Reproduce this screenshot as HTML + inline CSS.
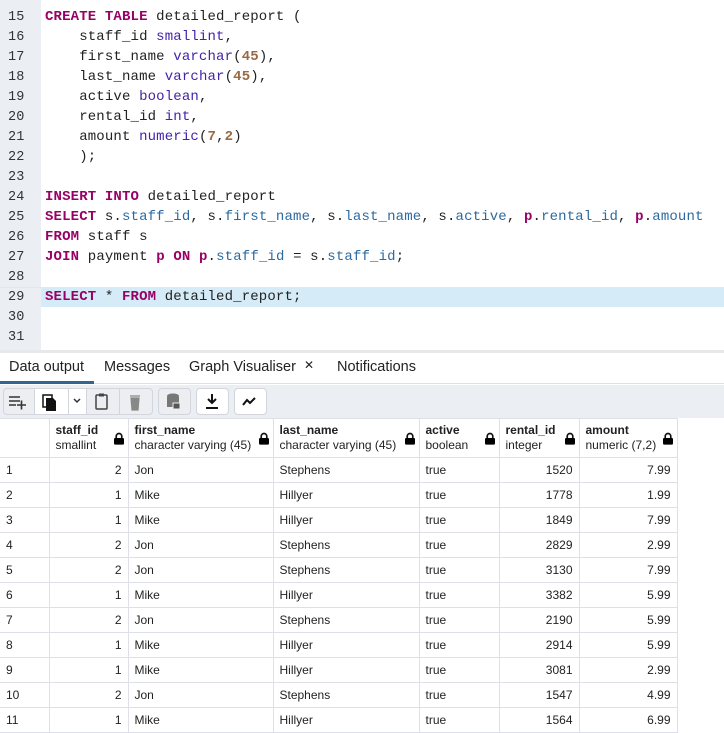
<!DOCTYPE html>
<html><head><style>
*{margin:0;padding:0;box-sizing:border-box}
body{width:724px;height:730px;overflow:hidden;background:#fff;position:relative;font-family:"Liberation Sans",sans-serif}
.gut{position:absolute;left:0;top:0;width:41px;height:350px;background:#ebeef3}
.code{position:absolute;left:0;top:-13px;width:724px}
.ln{height:20px;line-height:20px;font-family:"Liberation Mono",monospace;font-size:14px;letter-spacing:0.15px;white-space:pre;position:relative;color:#222}
.ln .n{display:inline-block;width:41px;padding-left:8px;color:#333;font-size:13.5px}
.ln .t{position:absolute;left:45px;top:0}
.hl{background:#d6ebf8}
.hl .n{background:#ebeef3}
.k{color:#990066;font-weight:bold}
.b{color:#4422aa}
.num{color:#9a6a42;font-weight:bold}
.p{color:#2b6aa0}
.sep{position:absolute;left:0;top:350px;width:724px;height:3px;background:#e6e8ec}
.tabs{position:absolute;left:0;top:353px;width:724px;height:31px;border-bottom:1px solid #dde0e6;font-size:14.5px;color:#222}
.tabs span{position:absolute;top:6px}
.ul{position:absolute;left:0;top:28px;width:94px;height:3px;background:#326690}
.tb{position:absolute;left:0;top:385px;width:724px;height:33px;background:#ebeef3}
.btn{position:absolute;top:3px;height:27px;border:1px solid #d2d6dc;border-radius:4px;background:#eceef1}
.w{background:#fff}
table{position:absolute;left:0;top:418px;border-collapse:collapse;font-size:12px;color:#222}
td{border:1px solid #dde0e6;height:25px;padding:0 6px;white-space:nowrap}
th{border:1px solid #dde0e6;height:39px;padding:0 6px;text-align:left;font-weight:normal;position:relative;vertical-align:middle;line-height:15px}
th b{display:block;font-weight:bold}
.r{text-align:right}
.lock{position:absolute;right:4px;top:13px;width:10px;height:13px}
td:first-child,th:first-child{border-left:none}
</style></head><body>
<div class="gut"></div>
<div class="code">
<div class="ln"><span class="n">14</span></div>
<div class="ln"><span class="n">15</span><span class="t"><span class="k">CREATE TABLE</span> detailed_report (</span></div>
<div class="ln"><span class="n">16</span><span class="t">    staff_id <span class="b">smallint</span>,</span></div>
<div class="ln"><span class="n">17</span><span class="t">    first_name <span class="b">varchar</span>(<span class="num">45</span>),</span></div>
<div class="ln"><span class="n">18</span><span class="t">    last_name <span class="b">varchar</span>(<span class="num">45</span>),</span></div>
<div class="ln"><span class="n">19</span><span class="t">    active <span class="b">boolean</span>,</span></div>
<div class="ln"><span class="n">20</span><span class="t">    rental_id <span class="b">int</span>,</span></div>
<div class="ln"><span class="n">21</span><span class="t">    amount <span class="b">numeric</span>(<span class="num">7</span>,<span class="num">2</span>)</span></div>
<div class="ln"><span class="n">22</span><span class="t">    );</span></div>
<div class="ln"><span class="n">23</span></div>
<div class="ln"><span class="n">24</span><span class="t"><span class="k">INSERT INTO</span> detailed_report</span></div>
<div class="ln"><span class="n">25</span><span class="t"><span class="k">SELECT</span> s.<span class="p">staff_id</span>, s.<span class="p">first_name</span>, s.<span class="p">last_name</span>, s.<span class="p">active</span>, <span class="k">p</span>.<span class="p">rental_id</span>, <span class="k">p</span>.<span class="p">amount</span></span></div>
<div class="ln"><span class="n">26</span><span class="t"><span class="k">FROM</span> staff s</span></div>
<div class="ln"><span class="n">27</span><span class="t"><span class="k">JOIN</span> payment <span class="k">p</span> <span class="k">ON</span> <span class="k">p</span>.<span class="p">staff_id</span> = s.<span class="p">staff_id</span>;</span></div>
<div class="ln"><span class="n">28</span></div>
<div class="ln hl"><span class="n">29</span><span class="t"><span class="k">SELECT</span> * <span class="k">FROM</span> detailed_report;</span></div>
<div class="ln"><span class="n">30</span></div>
<div class="ln"><span class="n">31</span></div>
</div>
<div class="sep"></div>
<div class="tabs">
<span style="left:9px">Data output</span><span style="left:104px">Messages</span><span style="left:189px">Graph Visualiser</span><span style="left:304px;font-size:12px;top:5px">✕</span><span style="left:337px">Notifications</span>
<div class="ul"></div>
</div>
<div class="tb">
<div class="btn" style="left:3px;width:150px"></div>
<div class="btn w" style="left:34px;width:35px;border-radius:0"></div>
<div class="btn w" style="left:68px;width:19px;border-radius:0"></div>
<div style="position:absolute;left:119px;top:3px;width:1px;height:27px;background:#d2d6dc"></div>
<div class="btn" style="left:158px;width:33px"></div>
<div class="btn w" style="left:196px;width:33px"></div>
<div class="btn w" style="left:234px;width:33px"></div>
<svg width="300" height="33" style="position:absolute;left:0;top:0">
<g stroke="#333" stroke-width="1.6" fill="none"><path d="M9 12h11M9 16h11M9 20h7M17 20h9M21.5 15.5v9"/></g>
<rect x="43" y="10" width="9" height="12" fill="#fff" stroke="#111" stroke-width="1.5"/><path d="M46 13h7l3 3v10h-10z" fill="#111"/>
<path d="M74 14l3 3 3-3" stroke="#333" stroke-width="1.5" fill="none"/>
<rect x="96" y="10" width="11" height="14" rx="1" fill="none" stroke="#444" stroke-width="1.5"/><rect x="99" y="8.5" width="5" height="3" fill="#444"/>
<path d="M130 11h10M131 13h8l-1 12h-6z" stroke="#888" stroke-width="1.2" fill="#888"/>
<ellipse cx="173" cy="11" rx="6" ry="2.5" fill="#777"/><rect x="167" y="12" width="12" height="10" fill="#777"/><rect x="173" y="18" width="7" height="6" fill="#555" stroke="#eee"/>
<path d="M212 9v9M208 14l4 4 4-4M206 23h12" stroke="#111" stroke-width="2" fill="none"/>
<path d="M243 20l4-5 3 3 5-5" stroke="#111" stroke-width="2" fill="none"/>
</svg>
</div>
<table>
<tr><th style="width:49px"></th>
<th style="width:79px"><b>staff_id</b>smallint<svg class="lock" viewBox="0 0 9 11"><path d="M2 5V3.5a2.5 2.5 0 015 0V5" stroke="#111" stroke-width="1.5" fill="none"/><rect y="5" width="9" height="6" rx="1"/></svg></th>
<th style="width:145px"><b>first_name</b>character varying (45)<svg class="lock" viewBox="0 0 9 11"><path d="M2 5V3.5a2.5 2.5 0 015 0V5" stroke="#111" stroke-width="1.5" fill="none"/><rect y="5" width="9" height="6" rx="1"/></svg></th>
<th style="width:146px"><b>last_name</b>character varying (45)<svg class="lock" viewBox="0 0 9 11"><path d="M2 5V3.5a2.5 2.5 0 015 0V5" stroke="#111" stroke-width="1.5" fill="none"/><rect y="5" width="9" height="6" rx="1"/></svg></th>
<th style="width:80px"><b>active</b>boolean<svg class="lock" viewBox="0 0 9 11"><path d="M2 5V3.5a2.5 2.5 0 015 0V5" stroke="#111" stroke-width="1.5" fill="none"/><rect y="5" width="9" height="6" rx="1"/></svg></th>
<th style="width:80px"><b>rental_id</b>integer<svg class="lock" viewBox="0 0 9 11"><path d="M2 5V3.5a2.5 2.5 0 015 0V5" stroke="#111" stroke-width="1.5" fill="none"/><rect y="5" width="9" height="6" rx="1"/></svg></th>
<th style="width:98px"><b>amount</b>numeric (7,2)<svg class="lock" viewBox="0 0 9 11"><path d="M2 5V3.5a2.5 2.5 0 015 0V5" stroke="#111" stroke-width="1.5" fill="none"/><rect y="5" width="9" height="6" rx="1"/></svg></th></tr>
<tr><td>1</td><td class="r">2</td><td>Jon</td><td>Stephens</td><td>true</td><td class="r">1520</td><td class="r">7.99</td></tr>
<tr><td>2</td><td class="r">1</td><td>Mike</td><td>Hillyer</td><td>true</td><td class="r">1778</td><td class="r">1.99</td></tr>
<tr><td>3</td><td class="r">1</td><td>Mike</td><td>Hillyer</td><td>true</td><td class="r">1849</td><td class="r">7.99</td></tr>
<tr><td>4</td><td class="r">2</td><td>Jon</td><td>Stephens</td><td>true</td><td class="r">2829</td><td class="r">2.99</td></tr>
<tr><td>5</td><td class="r">2</td><td>Jon</td><td>Stephens</td><td>true</td><td class="r">3130</td><td class="r">7.99</td></tr>
<tr><td>6</td><td class="r">1</td><td>Mike</td><td>Hillyer</td><td>true</td><td class="r">3382</td><td class="r">5.99</td></tr>
<tr><td>7</td><td class="r">2</td><td>Jon</td><td>Stephens</td><td>true</td><td class="r">2190</td><td class="r">5.99</td></tr>
<tr><td>8</td><td class="r">1</td><td>Mike</td><td>Hillyer</td><td>true</td><td class="r">2914</td><td class="r">5.99</td></tr>
<tr><td>9</td><td class="r">1</td><td>Mike</td><td>Hillyer</td><td>true</td><td class="r">3081</td><td class="r">2.99</td></tr>
<tr><td>10</td><td class="r">2</td><td>Jon</td><td>Stephens</td><td>true</td><td class="r">1547</td><td class="r">4.99</td></tr>
<tr><td>11</td><td class="r">1</td><td>Mike</td><td>Hillyer</td><td>true</td><td class="r">1564</td><td class="r">6.99</td></tr>
</table>
</body></html>
